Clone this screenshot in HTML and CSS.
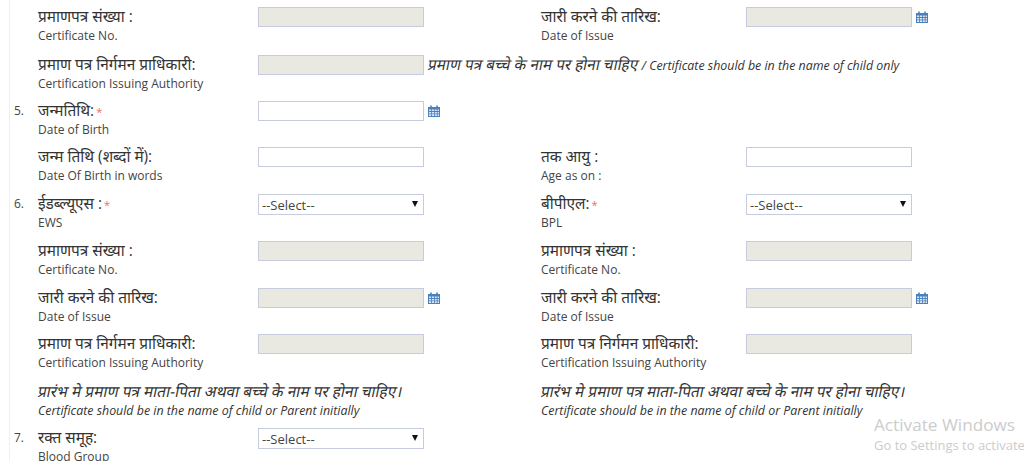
FILE: index.html
```html
<!DOCTYPE html>
<html>
<head lang="hi">
  <meta charset="UTF-8">
  <title>Application Form</title>
  <link rel="stylesheet" href="styles.css">
</head>
<body>
<svg class="defs" width="0" height="0">
  <symbol id="cal" viewBox="0 0 12 12">
    <path fill="#4a80bb" d="M0 2h2.2V.6h1.6V2h4.4V.6h1.6V2H12v10H0z"/>
    <path fill="#dbe7f5" d="M1 4.4h2.1v1.7H1zM3.9 4.4H6v1.7H3.9zM6.8 4.4h2v1.7h-2zM9.6 4.4H11v1.7H9.6zM1 6.9h2.1v1.6H1zM3.9 6.9H6v1.6H3.9zM6.8 6.9h2v1.6h-2zM9.6 6.9H11v1.6H9.6zM1 9.3h2.1V11H1zM3.9 9.3H6V11H3.9zM6.8 9.3h2V11h-2zM9.6 9.3H11V11H9.6z"/>
  </symbol>
</svg>
<div class="form">
  <!-- certificate of previous section -->
  <div class="row row-first">
    <div class="num"></div>
    <div class="lbl"><span class="hi">प्रमाणपत्र संख्या :</span><span class="en">Certificate No.</span></div>
    <div class="field"><input class="txt off" type="text"></div>
    <div class="lbl"><span class="hi">जारी करने की तारिख:</span><span class="en">Date of Issue</span></div>
    <div class="field"><input class="txt off" type="text"><svg class="cal"><use href="#cal"/></svg></div>
  </div>
  <div class="row row-short">
    <div class="num"></div>
    <div class="lbl"><span class="hi">प्रमाण पत्र निर्गमन प्राधिकारी:</span><span class="en">Certification Issuing Authority</span></div>
    <div class="field field-wide">
      <input class="txt off" type="text">
      <span class="hint"><span class="hint-hi">प्रमाण पत्र बच्चे के नाम पर होना चाहिए</span> / Certificate should be in the name of child only</span>
    </div>
  </div>
  <!-- date of birth -->
  <div class="row row-short">
    <div class="num">5.</div>
    <div class="lbl"><span class="hi">जन्मतिथि: <i class="req">*</i></span><span class="en">Date of Birth</span></div>
    <div class="field"><input class="txt" type="text"><svg class="cal"><use href="#cal"/></svg></div>
  </div>
  <div class="row">
    <div class="num"></div>
    <div class="lbl"><span class="hi">जन्म तिथि (शब्दों में):</span><span class="en">Date Of Birth in words</span></div>
    <div class="field"><input class="txt" type="text"></div>
    <div class="lbl"><span class="hi">तक आयु :</span><span class="en">Age as on :</span></div>
    <div class="field"><input class="txt" type="text"></div>
  </div>
  <!-- ews / bpl -->
  <div class="row">
    <div class="num">6.</div>
    <div class="lbl"><span class="hi">ईडब्ल्यूएस : <i class="req">*</i></span><span class="en">EWS</span></div>
    <div class="field"><div class="sel"><select><option>--Select--</option></select></div></div>
    <div class="lbl"><span class="hi">बीपीएल: <i class="req">*</i></span><span class="en">BPL</span></div>
    <div class="field"><div class="sel"><select><option>--Select--</option></select></div></div>
  </div>
  <div class="row">
    <div class="num"></div>
    <div class="lbl"><span class="hi">प्रमाणपत्र संख्या :</span><span class="en">Certificate No.</span></div>
    <div class="field"><input class="txt off" type="text"></div>
    <div class="lbl"><span class="hi">प्रमाणपत्र संख्या :</span><span class="en">Certificate No.</span></div>
    <div class="field"><input class="txt off" type="text"></div>
  </div>
  <div class="row row-short">
    <div class="num"></div>
    <div class="lbl"><span class="hi">जारी करने की तारिख:</span><span class="en">Date of Issue</span></div>
    <div class="field"><input class="txt off" type="text"><svg class="cal"><use href="#cal"/></svg></div>
    <div class="lbl"><span class="hi">जारी करने की तारिख:</span><span class="en">Date of Issue</span></div>
    <div class="field"><input class="txt off" type="text"><svg class="cal"><use href="#cal"/></svg></div>
  </div>
  <div class="row">
    <div class="num"></div>
    <div class="lbl"><span class="hi">प्रमाण पत्र निर्गमन प्राधिकारी:</span><span class="en">Certification Issuing Authority</span></div>
    <div class="field"><input class="txt off" type="text"></div>
    <div class="lbl"><span class="hi">प्रमाण पत्र निर्गमन प्राधिकारी:</span><span class="en">Certification Issuing Authority</span></div>
    <div class="field"><input class="txt off" type="text"></div>
  </div>
  <div class="row row-note">
    <div class="num"></div>
    <div class="note"><span class="hi">प्रारंभ मे प्रमाण पत्र माता-पिता अथवा बच्चे के नाम पर होना चाहिए।</span><span class="en">Certificate should be in the name of child or Parent initially</span></div>
    <div class="note"><span class="hi">प्रारंभ मे प्रमाण पत्र माता-पिता अथवा बच्चे के नाम पर होना चाहिए।</span><span class="en">Certificate should be in the name of child or Parent initially</span></div>
  </div>
  <!-- blood group -->
  <div class="row">
    <div class="num">7.</div>
    <div class="lbl"><span class="hi">रक्त समूह:</span><span class="en">Blood Group</span></div>
    <div class="field"><div class="sel"><select><option>--Select--</option></select></div></div>
  </div>
</div>
<div class="activate">
  <div class="activate-big">Activate Windows</div>
  <div class="activate-small">Go to Settings to activate</div>
</div>
</body>
</html>
```

FILE: styles.css
```css
html, body {
  margin: 0;
  padding: 0;
  height: 461px;
  overflow: hidden;
  background: #ffffff;
}

body {
  font-family: "Open Sans", "Noto Sans", "Noto Sans Devanagari", sans-serif;
  color: #333333;
}

.defs {
  display: block;
  height: 0;
}

.form {
  margin-left: 9px;
  padding-left: 4px;
  border-left: 1px solid #f0f0f0;
  height: 461px;
  box-sizing: border-box;
}

.row {
  display: grid;
  grid-template-columns: 24px 220px 283px 205px 1fr;
  height: 47px;
  padding-top: 7px;
  box-sizing: border-box;
}

.row-first {
  height: 48px;
}

.row-short {
  height: 46px;
}

.row-note {
  grid-template-columns: 24px 503px 1fr;
}

.num {
  font-size: 12px;
  line-height: 17px;
  margin-top: 1px;
  color: #444444;
}

.hi {
  display: block;
  font-size: 15.4px;
  line-height: 20px;
  height: 21px;
  color: #333333;
  white-space: nowrap;
}

.en {
  display: block;
  font-size: 12px;
  line-height: 16px;
  color: #444444;
}

.req {
  color: #ee6a6a;
  font-style: normal;
  font-size: 11px;
  margin-left: -2px;
}

.field {
  display: flex;
  align-items: flex-start;
  gap: 4px;
}

.field-wide {
  grid-column: 3 / 6;
}

.txt {
  width: 166px;
  height: 20px;
  box-sizing: border-box;
  border: 1px solid #c6cbdd;
  background: #ffffff;
  margin: 0;
  padding: 0;
}

.off {
  background: #e9e8e1;
}

.cal {
  width: 12px;
  height: 12px;
  margin-top: 4px;
}

.hint {
  font-size: 12.4px;
  font-style: italic;
  line-height: 20px;
  color: #333333;
  white-space: nowrap;
}

/* the devanagari font has no italic, so it is slanted by hand */
.hint-hi {
  display: inline-block;
  font-size: 15.4px;
  transform: skewX(-12deg);
}

.note .hi {
  font-size: 15.5px;
  height: 22px;
  width: max-content;
  transform: skewX(-12deg);
}

.note .en {
  font-style: italic;
  font-size: 12.4px;
  color: #333333;
}

.sel {
  position: relative;
  width: 166px;
  height: 21px;
}

.sel select {
  display: block;
  width: 100%;
  height: 100%;
  margin: 0;
  padding: 0 0 0 3px;
  border: 1px solid #c6cbdd;
  background: #ffffff;
  font-family: inherit;
  font-size: 13px;
  color: #444444;
  appearance: none;
  -webkit-appearance: none;
  border-radius: 0;
}

.sel:after {
  content: "";
  position: absolute;
  right: 6px;
  top: 7px;
  border-left: 3px solid transparent;
  border-right: 3px solid transparent;
  border-top: 6px solid #111111;
}

.activate {
  position: absolute;
  left: 874px;
  top: 414px;
  width: 150px;
  overflow: hidden;
  white-space: nowrap;
  color: #cccccc;
}

.activate-big {
  font-size: 17.2px;
  line-height: 22px;
}

.activate-small {
  font-size: 13px;
  line-height: 18px;
}
```
